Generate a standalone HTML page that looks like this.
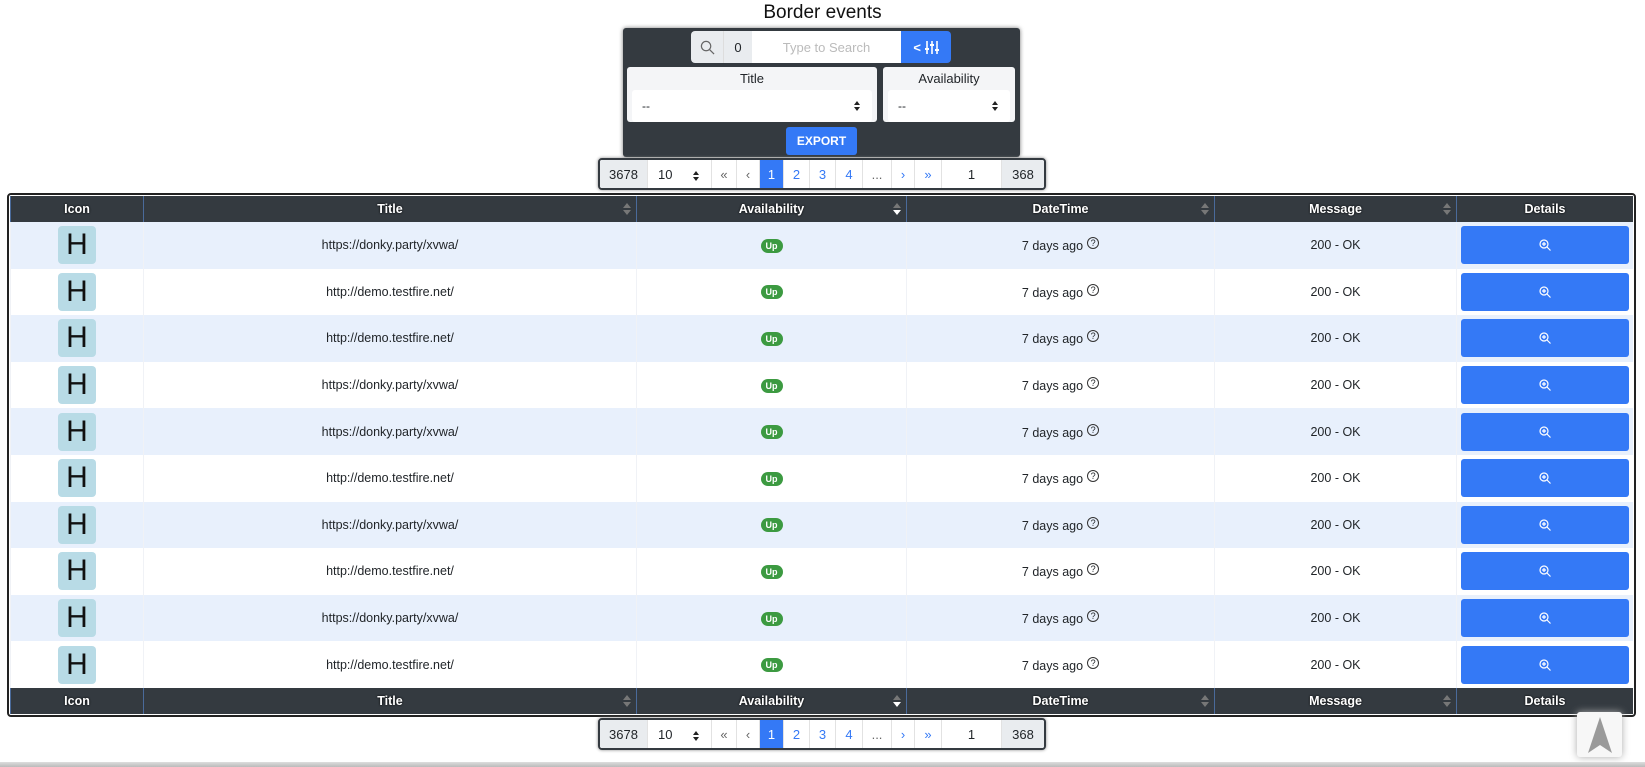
<!DOCTYPE html>
<html><head><meta charset="utf-8"><style>
*{box-sizing:border-box;margin:0;padding:0}
body{width:1645px;height:767px;background:#fff;font-family:"Liberation Sans",sans-serif;color:#212529;position:relative;overflow:hidden}
.abs{position:absolute}
h1{position:absolute;left:0;width:1645px;top:2px;text-align:center;font-size:19px;font-weight:normal;color:#111}
.panel{left:623px;top:28px;width:397px;height:129px;background:#343a40;border-radius:3px;box-shadow:0 0 4px #777}
.search{left:691px;top:31px;width:260px;height:32px;border-radius:4px;overflow:hidden;display:flex;font-size:13px}
.search div{display:flex;align-items:center;justify-content:center}
.fbox{background:#f4f5f7;border-radius:3px;font-size:13px;text-align:center;padding-top:4px}
.sel{background:#fff;margin:4px 5px;height:32px;border-radius:3px;text-align:left;padding:9px 10px;font-size:12px;position:relative}
.sel:after,.pg .s:after{content:"";position:absolute;right:12px;top:11px;border-left:3px solid transparent;border-right:3px solid transparent;border-bottom:4px solid #222}
.sel:before,.pg .s:before{content:"";position:absolute;right:12px;top:17px;border-left:3px solid transparent;border-right:3px solid transparent;border-top:4px solid #222}
.exp{left:786px;top:127px;width:71px;height:28px;background:#3479f6;color:#fff;font-size:12px;font-weight:bold;border-radius:3px;text-align:center;line-height:28px}
.pg{left:598px;width:448px;height:32px;border:2px solid #343a40;border-radius:4px;display:flex;font-size:13px;background:#fff;overflow:hidden;box-shadow:0 0 3px #888}
.pg div{display:flex;align-items:center;justify-content:center;border-right:1px solid #e2e2e2;position:relative}
.pg .b{color:#3479f6}
.pg .g{font-size:13px;line-height:1}
table{position:absolute;left:7px;top:193px;width:1629px;border-collapse:separate;border-spacing:0;border:2px solid #222;border-radius:4px;font-size:12.5px;padding:1px}
th{background:#343a40;color:#fff;height:26px;font-size:12.5px;border-left:1px solid #4a6a9a;position:relative;text-shadow:0 0 2px #000}
th.s:after{content:"";position:absolute;right:5px;top:7px;border-left:4px solid transparent;border-right:4px solid transparent;border-bottom:5px solid #777}
th.s:before{content:"";position:absolute;right:5px;top:14px;border-left:4px solid transparent;border-right:4px solid transparent;border-top:5px solid #777}
th.d:before{border-top-color:#fff}
td{height:46.6px;text-align:center;border-left:1px solid #f0f2f6}
tr.a td{background:#e8f0fc}
.ic{display:inline-block;width:38px;height:38px;background:#b8dbe6;border-radius:4px;font-size:30px;line-height:38px;color:#111}
.up{display:inline-block;background:#3c9a41;color:#fff;font-size:9px;font-weight:bold;border-radius:8px;padding:2px 5px}
.q{display:inline-block;width:12px;height:12px;border:1px solid #333;border-radius:50%;font-size:9px;line-height:10px;vertical-align:4px;margin-left:4px}
.det{margin:0 4px;height:38px;background:#3479f6;border-radius:3px;display:flex;align-items:center;justify-content:center}
</style></head><body>
<h1>Border events</h1>
<div class="abs panel"></div>
<div class="abs search">
<div style="width:33px;background:#e9ecef;border-right:1px solid #ddd"><svg width="15" height="15" viewBox="0 0 16 16"><circle cx="6.5" cy="6.5" r="5" fill="none" stroke="#666" stroke-width="1.3"/><path d="M10.3 10.3L15 15" stroke="#666" stroke-width="1.3"/></svg></div>
<div style="width:28px;background:#e9ecef">0</div>
<div style="width:149px;background:#fff;color:#bbb">Type to Search</div>
<div style="width:50px;background:#3479f6;color:#fff;font-weight:bold">&lt;&nbsp;<svg width="14" height="13" viewBox="0 0 14 13"><path d="M2 0v13M7 0v13M12 0v13" stroke="#fff" stroke-width="1.6"/><path d="M0 8h4M5 4h4M10 9h4" stroke="#fff" stroke-width="2"/></svg></div>
</div>
<div class="abs fbox" style="left:627px;top:67px;width:250px;height:55px">Title<div class="sel">--</div></div>
<div class="abs fbox" style="left:883px;top:67px;width:132px;height:55px">Availability<div class="sel">--</div></div>
<div class="abs exp">EXPORT</div>

<div class="abs pg" style="top:158px">
<div style="width:48px;background:#e9ecef">3678</div><div class="s" style="width:64px;justify-content:flex-start;padding-left:10px">10</div>
<div class="g" style="width:25px;color:#666">«</div><div style="width:23px;color:#666">‹</div><div style="width:24px;background:#3479f6;color:#fff">1</div><div class="b" style="width:26px">2</div><div class="b" style="width:26px">3</div><div class="b" style="width:27px">4</div><div style="width:29px;color:#666">...</div><div class="b" style="width:23px">›</div><div class="b g" style="width:27px">»</div><div style="width:60px">1</div><div style="flex:1;background:#e9ecef;border:0">368</div>
</div>

<table>
<tr><th style="width:133px">Icon</th><th class="s" style="width:493px">Title</th><th class="s d" style="width:270px">Availability</th><th class="s" style="width:308px">DateTime</th><th class="s" style="width:242px">Message</th><th>Details</th></tr>
<tr class="a"><td><span class="ic">H</span></td><td>https://donky.party/xvwa/</td><td><span class="up">Up</span></td><td>7 days ago<span class="q">?</span></td><td>200 - OK</td><td><span class="det"><svg width="12" height="12" viewBox="0 0 12 12"><circle cx="5" cy="5" r="4" fill="none" stroke="#fff" stroke-width="1.2"/><path d="M8 8l3.5 3.5M3 5h4M5 3v4" stroke="#fff" stroke-width="1.2"/></svg></span></td></tr>
<tr><td><span class="ic">H</span></td><td>http://demo.testfire.net/</td><td><span class="up">Up</span></td><td>7 days ago<span class="q">?</span></td><td>200 - OK</td><td><span class="det"><svg width="12" height="12" viewBox="0 0 12 12"><circle cx="5" cy="5" r="4" fill="none" stroke="#fff" stroke-width="1.2"/><path d="M8 8l3.5 3.5M3 5h4M5 3v4" stroke="#fff" stroke-width="1.2"/></svg></span></td></tr>
<tr class="a"><td><span class="ic">H</span></td><td>http://demo.testfire.net/</td><td><span class="up">Up</span></td><td>7 days ago<span class="q">?</span></td><td>200 - OK</td><td><span class="det"><svg width="12" height="12" viewBox="0 0 12 12"><circle cx="5" cy="5" r="4" fill="none" stroke="#fff" stroke-width="1.2"/><path d="M8 8l3.5 3.5M3 5h4M5 3v4" stroke="#fff" stroke-width="1.2"/></svg></span></td></tr>
<tr><td><span class="ic">H</span></td><td>https://donky.party/xvwa/</td><td><span class="up">Up</span></td><td>7 days ago<span class="q">?</span></td><td>200 - OK</td><td><span class="det"><svg width="12" height="12" viewBox="0 0 12 12"><circle cx="5" cy="5" r="4" fill="none" stroke="#fff" stroke-width="1.2"/><path d="M8 8l3.5 3.5M3 5h4M5 3v4" stroke="#fff" stroke-width="1.2"/></svg></span></td></tr>
<tr class="a"><td><span class="ic">H</span></td><td>https://donky.party/xvwa/</td><td><span class="up">Up</span></td><td>7 days ago<span class="q">?</span></td><td>200 - OK</td><td><span class="det"><svg width="12" height="12" viewBox="0 0 12 12"><circle cx="5" cy="5" r="4" fill="none" stroke="#fff" stroke-width="1.2"/><path d="M8 8l3.5 3.5M3 5h4M5 3v4" stroke="#fff" stroke-width="1.2"/></svg></span></td></tr>
<tr><td><span class="ic">H</span></td><td>http://demo.testfire.net/</td><td><span class="up">Up</span></td><td>7 days ago<span class="q">?</span></td><td>200 - OK</td><td><span class="det"><svg width="12" height="12" viewBox="0 0 12 12"><circle cx="5" cy="5" r="4" fill="none" stroke="#fff" stroke-width="1.2"/><path d="M8 8l3.5 3.5M3 5h4M5 3v4" stroke="#fff" stroke-width="1.2"/></svg></span></td></tr>
<tr class="a"><td><span class="ic">H</span></td><td>https://donky.party/xvwa/</td><td><span class="up">Up</span></td><td>7 days ago<span class="q">?</span></td><td>200 - OK</td><td><span class="det"><svg width="12" height="12" viewBox="0 0 12 12"><circle cx="5" cy="5" r="4" fill="none" stroke="#fff" stroke-width="1.2"/><path d="M8 8l3.5 3.5M3 5h4M5 3v4" stroke="#fff" stroke-width="1.2"/></svg></span></td></tr>
<tr><td><span class="ic">H</span></td><td>http://demo.testfire.net/</td><td><span class="up">Up</span></td><td>7 days ago<span class="q">?</span></td><td>200 - OK</td><td><span class="det"><svg width="12" height="12" viewBox="0 0 12 12"><circle cx="5" cy="5" r="4" fill="none" stroke="#fff" stroke-width="1.2"/><path d="M8 8l3.5 3.5M3 5h4M5 3v4" stroke="#fff" stroke-width="1.2"/></svg></span></td></tr>
<tr class="a"><td><span class="ic">H</span></td><td>https://donky.party/xvwa/</td><td><span class="up">Up</span></td><td>7 days ago<span class="q">?</span></td><td>200 - OK</td><td><span class="det"><svg width="12" height="12" viewBox="0 0 12 12"><circle cx="5" cy="5" r="4" fill="none" stroke="#fff" stroke-width="1.2"/><path d="M8 8l3.5 3.5M3 5h4M5 3v4" stroke="#fff" stroke-width="1.2"/></svg></span></td></tr>
<tr><td><span class="ic">H</span></td><td>http://demo.testfire.net/</td><td><span class="up">Up</span></td><td>7 days ago<span class="q">?</span></td><td>200 - OK</td><td><span class="det"><svg width="12" height="12" viewBox="0 0 12 12"><circle cx="5" cy="5" r="4" fill="none" stroke="#fff" stroke-width="1.2"/><path d="M8 8l3.5 3.5M3 5h4M5 3v4" stroke="#fff" stroke-width="1.2"/></svg></span></td></tr>
<tr><th>Icon</th><th class="s">Title</th><th class="s d">Availability</th><th class="s">DateTime</th><th class="s">Message</th><th>Details</th></tr>
</table>

<div class="abs pg" style="top:718px">
<div style="width:48px;background:#e9ecef">3678</div><div class="s" style="width:64px;justify-content:flex-start;padding-left:10px">10</div>
<div class="g" style="width:25px;color:#666">«</div><div style="width:23px;color:#666">‹</div><div style="width:24px;background:#3479f6;color:#fff">1</div><div class="b" style="width:26px">2</div><div class="b" style="width:26px">3</div><div class="b" style="width:27px">4</div><div style="width:29px;color:#666">...</div><div class="b" style="width:23px">›</div><div class="b g" style="width:27px">»</div><div style="width:60px">1</div><div style="flex:1;background:#e9ecef;border:0">368</div>
</div>

<div class="abs" style="left:1577px;top:712px;width:45px;height:45px;background:#f7f7f7;border-radius:3px;box-shadow:0 0 8px #aaa;display:flex;align-items:center;justify-content:center"><svg width="24" height="36" viewBox="0 0 24 36"><path d="M12 0L24 36L12 28L0 36Z" fill="#9a9a9a"/></svg></div>
<div class="abs" style="left:0;top:762px;width:1645px;height:5px;background:linear-gradient(#ddd,#bbb)"></div>
</body></html>
